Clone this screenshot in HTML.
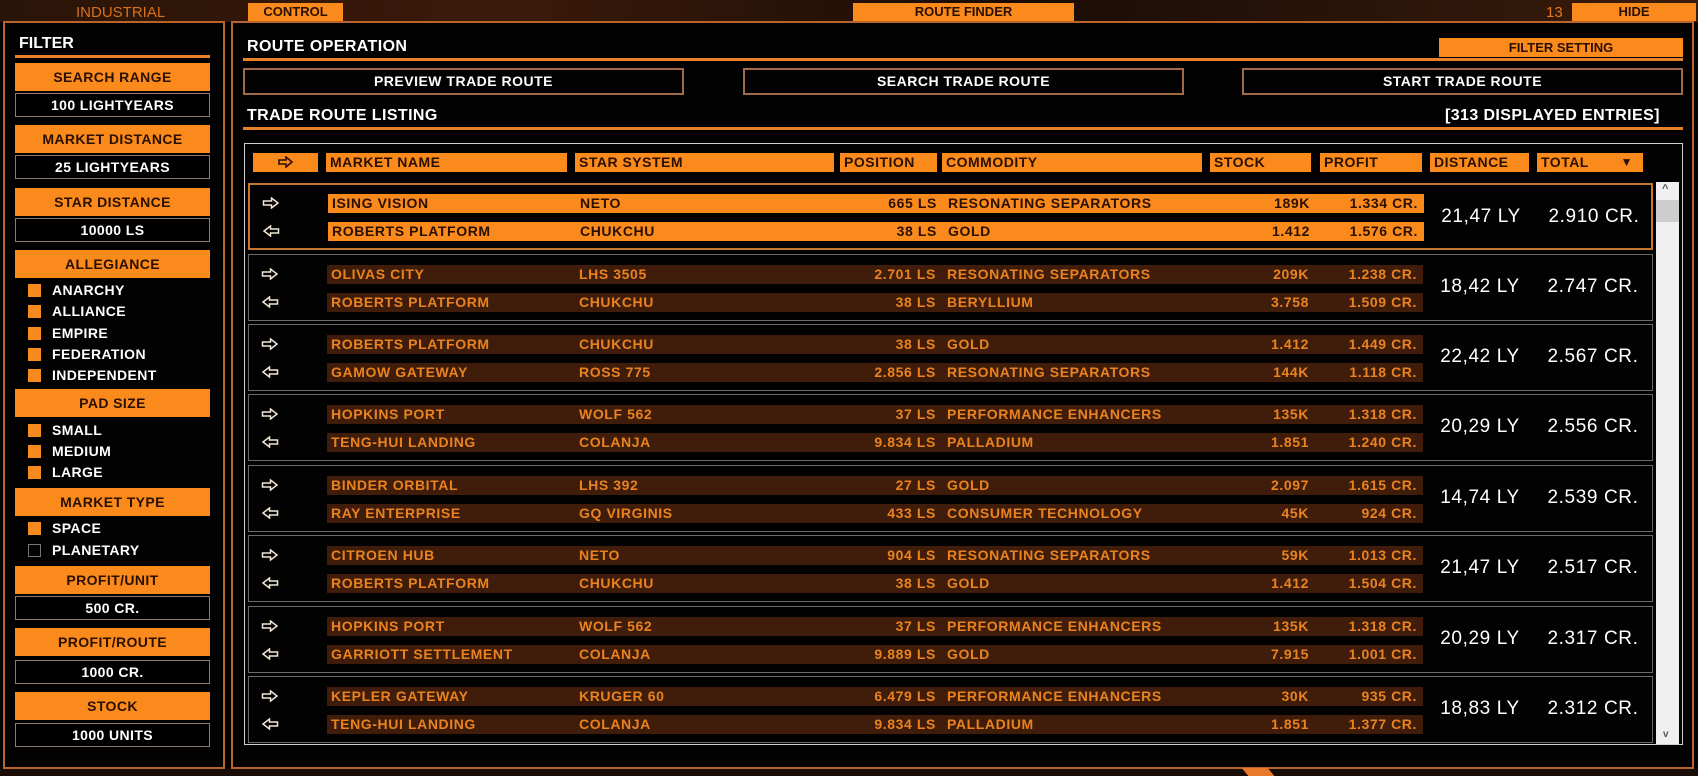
<!DOCTYPE html>
<html><head><meta charset="utf-8"><style>
*{margin:0;padding:0;box-sizing:border-box}
body{width:1698px;height:776px;background:#050302;position:relative;overflow:hidden;font-family:"Liberation Sans",sans-serif;font-weight:bold;color:#fff}
.a{position:absolute}
.ob{position:absolute;background:#fb8a1c;color:#2a1000;font-size:14px;text-align:center;line-height:28px;letter-spacing:.4px}
.vb{position:absolute;border:1px solid #8a7a70;background:#000;color:#fff;font-size:14px;text-align:center;line-height:22px;letter-spacing:.4px}
.ck{position:absolute;left:28px;width:13px;height:13px;background:#f68a1e}
.cl{position:absolute;left:52px;font-size:14px;color:#fff;line-height:16px;letter-spacing:.4px}
.btn{position:absolute;top:68px;height:27px;border:2px solid #a06a48;color:#fff;font-size:14px;text-align:center;line-height:23px;letter-spacing:.5px}
.hd{position:absolute;top:153px;height:19px;background:#fb8a1c;color:#2a1000;font-size:14px;line-height:19px;padding-left:4px;letter-spacing:.5px}
.g{position:absolute;left:248px;width:1405px;height:67px;border:1px solid #6a6a6a}
.g.s{border:2px solid #c8782c}
.bar{position:absolute;left:78px;width:1096px;height:19px;background:#3f1d0a;color:#ea831f;font-size:14px;line-height:19px;letter-spacing:.6px}
.s .bar{background:#fb8a1c;color:#2a1000}
.bar span{position:absolute;top:0}
.n{left:4px}.y{left:252px}.p{right:487px}.c{left:620px}.k{right:114px}.f{right:6px}
.ar{position:absolute;left:12px;width:18px;height:12px}
.d{position:absolute;top:21px;font-size:19px;color:#fff;font-weight:normal;letter-spacing:.6px}
.d1{left:1181px;width:100px;text-align:center}.d2{left:1289px;width:110px;text-align:center}
</style></head><body>
<div class="a" style="left:0;top:0;width:1698px;height:22px;background:linear-gradient(90deg,#2a1408,#3a1a0a 30%,#1a0c05 60%,#3a1c0c)"></div>
<div class="a" style="left:76px;top:4px;color:#d8701c;font-size:15px;font-weight:normal">INDUSTRIAL</div>
<div class="a" style="left:248px;top:3px;width:95px;height:18px;background:#fb8a1c;color:#2a1000;font-size:13px;text-align:center;line-height:18px">CONTROL</div>
<div class="a" style="left:853px;top:3px;width:221px;height:18px;background:#fb8a1c;color:#2a1000;font-size:13px;text-align:center;line-height:18px">ROUTE FINDER</div>
<div class="a" style="left:1546px;top:4px;color:#e8781c;font-size:15px;font-weight:normal">13</div>
<div class="a" style="left:1572px;top:3px;width:124px;height:18px;background:#fb8a1c;color:#2a1000;font-size:13px;text-align:center;line-height:18px">HIDE</div>

<div class="a" style="left:3px;top:21px;width:222px;height:748px;border:2px solid #b8642a;background:#030202"></div>
<div class="a" style="left:19px;top:35px;font-size:16px">FILTER</div>
<div class="a" style="left:15px;top:55px;width:195px;height:3px;background:#e8822a"></div>
<div class="ob" style="left:15px;top:63px;width:195px">SEARCH RANGE</div>
<div class="vb" style="left:15px;top:93px;width:195px;height:24px">100 LIGHTYEARS</div>
<div class="ob" style="left:15px;top:125px;width:195px">MARKET DISTANCE</div>
<div class="vb" style="left:15px;top:155px;width:195px;height:24px">25 LIGHTYEARS</div>
<div class="ob" style="left:15px;top:188px;width:195px">STAR DISTANCE</div>
<div class="vb" style="left:15px;top:218px;width:195px;height:24px">10000 LS</div>
<div class="ob" style="left:15px;top:250px;width:195px">ALLEGIANCE</div>
<div class="ck" style="top:284px"></div><div class="cl" style="top:282px">ANARCHY</div>
<div class="ck" style="top:305px"></div><div class="cl" style="top:303px">ALLIANCE</div>
<div class="ck" style="top:327px"></div><div class="cl" style="top:325px">EMPIRE</div>
<div class="ck" style="top:348px"></div><div class="cl" style="top:346px">FEDERATION</div>
<div class="ck" style="top:369px"></div><div class="cl" style="top:367px">INDEPENDENT</div>
<div class="ob" style="left:15px;top:389px;width:195px">PAD SIZE</div>
<div class="ck" style="top:424px"></div><div class="cl" style="top:422px">SMALL</div>
<div class="ck" style="top:445px"></div><div class="cl" style="top:443px">MEDIUM</div>
<div class="ck" style="top:466px"></div><div class="cl" style="top:464px">LARGE</div>
<div class="ob" style="left:15px;top:488px;width:195px">MARKET TYPE</div>
<div class="ck" style="top:522px"></div><div class="cl" style="top:520px">SPACE</div>
<div class="ck" style="top:544px;background:none;border:1px solid #777"></div><div class="cl" style="top:542px">PLANETARY</div>
<div class="ob" style="left:15px;top:566px;width:195px">PROFIT/UNIT</div>
<div class="vb" style="left:15px;top:596px;width:195px;height:24px">500 CR.</div>
<div class="ob" style="left:15px;top:628px;width:195px">PROFIT/ROUTE</div>
<div class="vb" style="left:15px;top:660px;width:195px;height:24px">1000 CR.</div>
<div class="ob" style="left:15px;top:692px;width:195px">STOCK</div>
<div class="vb" style="left:15px;top:723px;width:195px;height:24px">1000 UNITS</div>

<div class="a" style="left:231px;top:21px;width:1463px;height:748px;border:2px solid #b8642a;background:#030202"></div>
<div class="a" style="left:247px;top:38px;font-size:16px;letter-spacing:.4px">ROUTE OPERATION</div>
<div class="a" style="left:1439px;top:38px;width:244px;height:19px;background:#fb8a1c;color:#2a1000;font-size:13px;text-align:center;line-height:19px">FILTER SETTING</div>
<div class="a" style="left:243px;top:58px;width:1440px;height:3px;background:#e8822a"></div>
<div class="btn" style="left:243px;width:441px">PREVIEW TRADE ROUTE</div>
<div class="btn" style="left:743px;width:441px">SEARCH TRADE ROUTE</div>
<div class="btn" style="left:1242px;width:441px">START TRADE ROUTE</div>
<div class="a" style="left:247px;top:107px;font-size:16px;letter-spacing:.4px">TRADE ROUTE LISTING</div>
<div class="a" style="left:1445px;top:107px;font-size:16px;letter-spacing:.4px">[313 DISPLAYED ENTRIES]</div>
<div class="a" style="left:243px;top:127px;width:1440px;height:3px;background:#e8822a"></div>
<div class="a" style="left:244px;top:143px;width:1439px;height:602px;border:1px solid #cfcfcf"></div>

<div class="hd" style="left:253px;width:65px;text-align:center;padding:0"><svg width="16" height="12" viewBox="0 0 16 12" style="vertical-align:-1px"><path d="M1 4h7V1l6 5-6 5V8H1z" fill="none" stroke="#2a1000" stroke-width="1.6"/></svg></div>
<div class="hd" style="left:326px;width:241px">MARKET NAME</div>
<div class="hd" style="left:575px;width:259px">STAR SYSTEM</div>
<div class="hd" style="left:840px;width:97px">POSITION</div>
<div class="hd" style="left:942px;width:260px">COMMODITY</div>
<div class="hd" style="left:1210px;width:101px">STOCK</div>
<div class="hd" style="left:1320px;width:102px">PROFIT</div>
<div class="hd" style="left:1430px;width:99px">DISTANCE</div>
<div class="hd" style="left:1537px;width:106px">TOTAL<span style="position:absolute;right:10px;font-size:12px">▼</span></div>

<div class="a" style="left:1656px;top:182px;width:23px;height:562px;background:#f0f0f0"></div>
<div class="a" style="left:1656px;top:200px;width:23px;height:22px;background:#cdcdcd"></div>
<div class="a" style="left:1662px;top:183px;font-size:11px;color:#555">^</div>
<div class="a" style="left:1663px;top:729px;font-size:10px;color:#555">v</div>

<svg width="0" height="0" style="position:absolute"><defs>
<symbol id="r" viewBox="0 0 18 12"><path d="M1.5 4h8V1l6.5 5-6.5 5V8h-8z" fill="none" stroke="#f2e6d6" stroke-width="1.5"/></symbol>
<symbol id="l" viewBox="0 0 18 12"><path d="M16.5 4h-8V1L2 6l6.5 5V8h8z" fill="none" stroke="#f2e6d6" stroke-width="1.5"/></symbol>
</defs></svg>

<div class="g s" style="top:183px">
<svg class="ar" style="top:12px"><use href="#r"/></svg><svg class="ar" style="top:40px"><use href="#l"/></svg>
<div class="bar" style="top:9px"><span class="n">ISING VISION</span><span class="y">NETO</span><span class="p">665 LS</span><span class="c">RESONATING SEPARATORS</span><span class="k">189K</span><span class="f">1.334 CR.</span></div>
<div class="bar" style="top:37px"><span class="n">ROBERTS PLATFORM</span><span class="y">CHUKCHU</span><span class="p">38 LS</span><span class="c">GOLD</span><span class="k">1.412</span><span class="f">1.576 CR.</span></div>
<div class="d d1">21,47 LY</div><div class="d d2">2.910 CR.</div></div>

<div class="g" style="top:254px">
<svg class="ar" style="top:13px"><use href="#r"/></svg><svg class="ar" style="top:41px"><use href="#l"/></svg>
<div class="bar" style="top:10px"><span class="n">OLIVAS CITY</span><span class="y">LHS 3505</span><span class="p">2.701 LS</span><span class="c">RESONATING SEPARATORS</span><span class="k">209K</span><span class="f">1.238 CR.</span></div>
<div class="bar" style="top:38px"><span class="n">ROBERTS PLATFORM</span><span class="y">CHUKCHU</span><span class="p">38 LS</span><span class="c">BERYLLIUM</span><span class="k">3.758</span><span class="f">1.509 CR.</span></div>
<div class="d d1">18,42 LY</div><div class="d d2">2.747 CR.</div></div>

<div class="g" style="top:324px">
<svg class="ar" style="top:13px"><use href="#r"/></svg><svg class="ar" style="top:41px"><use href="#l"/></svg>
<div class="bar" style="top:10px"><span class="n">ROBERTS PLATFORM</span><span class="y">CHUKCHU</span><span class="p">38 LS</span><span class="c">GOLD</span><span class="k">1.412</span><span class="f">1.449 CR.</span></div>
<div class="bar" style="top:38px"><span class="n">GAMOW GATEWAY</span><span class="y">ROSS 775</span><span class="p">2.856 LS</span><span class="c">RESONATING SEPARATORS</span><span class="k">144K</span><span class="f">1.118 CR.</span></div>
<div class="d d1">22,42 LY</div><div class="d d2">2.567 CR.</div></div>

<div class="g" style="top:394px">
<svg class="ar" style="top:13px"><use href="#r"/></svg><svg class="ar" style="top:41px"><use href="#l"/></svg>
<div class="bar" style="top:10px"><span class="n">HOPKINS PORT</span><span class="y">WOLF 562</span><span class="p">37 LS</span><span class="c">PERFORMANCE ENHANCERS</span><span class="k">135K</span><span class="f">1.318 CR.</span></div>
<div class="bar" style="top:38px"><span class="n">TENG-HUI LANDING</span><span class="y">COLANJA</span><span class="p">9.834 LS</span><span class="c">PALLADIUM</span><span class="k">1.851</span><span class="f">1.240 CR.</span></div>
<div class="d d1">20,29 LY</div><div class="d d2">2.556 CR.</div></div>

<div class="g" style="top:465px">
<svg class="ar" style="top:13px"><use href="#r"/></svg><svg class="ar" style="top:41px"><use href="#l"/></svg>
<div class="bar" style="top:10px"><span class="n">BINDER ORBITAL</span><span class="y">LHS 392</span><span class="p">27 LS</span><span class="c">GOLD</span><span class="k">2.097</span><span class="f">1.615 CR.</span></div>
<div class="bar" style="top:38px"><span class="n">RAY ENTERPRISE</span><span class="y">GQ VIRGINIS</span><span class="p">433 LS</span><span class="c">CONSUMER TECHNOLOGY</span><span class="k">45K</span><span class="f">924 CR.</span></div>
<div class="d d1">14,74 LY</div><div class="d d2">2.539 CR.</div></div>

<div class="g" style="top:535px">
<svg class="ar" style="top:13px"><use href="#r"/></svg><svg class="ar" style="top:41px"><use href="#l"/></svg>
<div class="bar" style="top:10px"><span class="n">CITROEN HUB</span><span class="y">NETO</span><span class="p">904 LS</span><span class="c">RESONATING SEPARATORS</span><span class="k">59K</span><span class="f">1.013 CR.</span></div>
<div class="bar" style="top:38px"><span class="n">ROBERTS PLATFORM</span><span class="y">CHUKCHU</span><span class="p">38 LS</span><span class="c">GOLD</span><span class="k">1.412</span><span class="f">1.504 CR.</span></div>
<div class="d d1">21,47 LY</div><div class="d d2">2.517 CR.</div></div>

<div class="g" style="top:606px">
<svg class="ar" style="top:13px"><use href="#r"/></svg><svg class="ar" style="top:41px"><use href="#l"/></svg>
<div class="bar" style="top:10px"><span class="n">HOPKINS PORT</span><span class="y">WOLF 562</span><span class="p">37 LS</span><span class="c">PERFORMANCE ENHANCERS</span><span class="k">135K</span><span class="f">1.318 CR.</span></div>
<div class="bar" style="top:38px"><span class="n">GARRIOTT SETTLEMENT</span><span class="y">COLANJA</span><span class="p">9.889 LS</span><span class="c">GOLD</span><span class="k">7.915</span><span class="f">1.001 CR.</span></div>
<div class="d d1">20,29 LY</div><div class="d d2">2.317 CR.</div></div>

<div class="g" style="top:676px">
<svg class="ar" style="top:13px"><use href="#r"/></svg><svg class="ar" style="top:41px"><use href="#l"/></svg>
<div class="bar" style="top:10px"><span class="n">KEPLER GATEWAY</span><span class="y">KRUGER 60</span><span class="p">6.479 LS</span><span class="c">PERFORMANCE ENHANCERS</span><span class="k">30K</span><span class="f">935 CR.</span></div>
<div class="bar" style="top:38px"><span class="n">TENG-HUI LANDING</span><span class="y">COLANJA</span><span class="p">9.834 LS</span><span class="c">PALLADIUM</span><span class="k">1.851</span><span class="f">1.377 CR.</span></div>
<div class="d d1">18,83 LY</div><div class="d d2">2.312 CR.</div></div>

<div class="a" style="left:0;top:769px;width:1698px;height:7px;background:#1a0c06"></div>
<div class="a" style="left:1245px;top:768px;width:26px;height:8px;background:#e8782a;transform:skewX(40deg)"></div>
</body></html>
